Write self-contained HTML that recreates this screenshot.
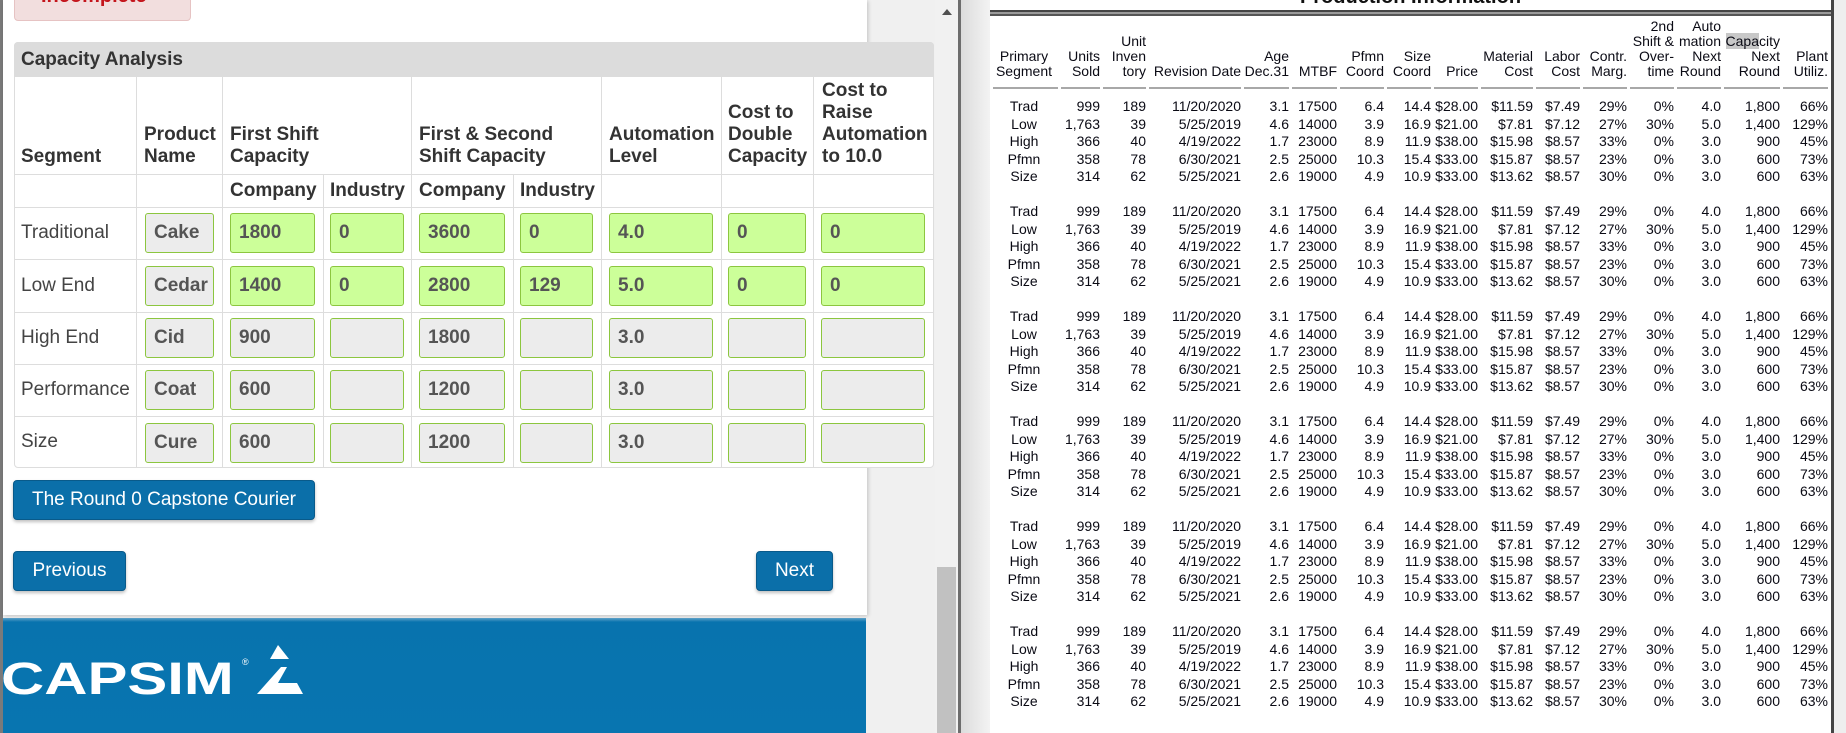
<!DOCTYPE html>
<html><head><meta charset="utf-8">
<style>
*{margin:0;padding:0;box-sizing:border-box}
body{width:1846px;height:733px;overflow:hidden;position:relative;background:#f0f0f0;font-family:"Liberation Sans",Arial,sans-serif}
.a{position:absolute}
.h{font-weight:bold;font-size:19px;color:#333;line-height:22px}
.lbl{font-size:19px;color:#444;line-height:22px}
.in{position:absolute;height:40px;border:1px solid #8cc63f;border-radius:3px;background:#ececec;font-weight:bold;font-size:19px;color:#555;line-height:38px;padding-left:8px;overflow:hidden;white-space:nowrap}
.g{background:#ccff99}
.vl{position:absolute;width:1px;background:#ddd}
.hl{position:absolute;height:1px;background:#ddd;left:14px;width:920px}
.btn{position:absolute;background:#0b6fa9;border:1px solid #095a8a;border-radius:4px;color:#fff;font-size:19px;text-align:center;line-height:38px;box-shadow:0 2px 3px rgba(0,0,0,.25)}
table{border-collapse:collapse;table-layout:fixed;font-size:14px;color:#0a0a14}
td{text-align:right;padding:0;white-space:nowrap;overflow:visible}
td.c{text-align:center}
.dt td{line-height:17.5px;height:17.5px}
.hd td{line-height:15px;vertical-align:bottom}
.sep td div{height:2px;background:#a8a8a8;margin-left:3px}
</style></head><body>
<!-- left side -->
<div class="a" style="left:0;top:0;width:3px;height:733px;background:#7a7a7a"></div>
<div class="a" style="left:3px;top:0;width:864px;height:615px;background:#fff;box-shadow:1px 1px 4px rgba(0,0,0,.2)"></div>
<div class="a" style="left:14px;top:-6px;width:177px;height:27px;background:#f2dede;border:1px solid #e6c3c3;border-radius:4px;overflow:hidden"><div style="position:absolute;left:26px;top:-10px;font-weight:bold;font-size:20px;color:#c4141b">Incomplete</div></div>
<!-- scrollbar -->
<div class="a" style="left:935px;top:0;width:23px;height:733px;background:#f1f1f1"></div>
<div class="a" style="left:937px;top:567px;width:19px;height:166px;background:#c1c1c1"></div>
<div class="a" style="left:942px;top:9px;width:0;height:0;border-left:5px solid transparent;border-right:5px solid transparent;border-bottom:6px solid #505050"></div>
<!-- panel -->
<div class="a" style="left:14px;top:42px;width:920px;height:426px;background:#fff;border:1px solid #ddd;border-radius:4px"></div>
<div class="a" style="left:14px;top:42px;width:920px;height:35px;background:#dcdcdc;border-radius:4px 4px 0 0"></div>
<div class="a h" style="left:21px;top:49px">Capacity Analysis</div>
<div class="hl" style="top:174px"></div><div class="hl" style="top:207px"></div><div class="hl" style="top:259px"></div><div class="hl" style="top:312px"></div><div class="hl" style="top:364px"></div><div class="hl" style="top:416px"></div>
<div class="vl" style="left:136px;top:77px;height:391px"></div>
<div class="vl" style="left:222px;top:77px;height:391px"></div>
<div class="vl" style="left:323px;top:174px;height:294px"></div>
<div class="vl" style="left:411px;top:77px;height:391px"></div>
<div class="vl" style="left:513px;top:174px;height:294px"></div>
<div class="vl" style="left:601px;top:77px;height:391px"></div>
<div class="vl" style="left:721px;top:77px;height:391px"></div>
<div class="vl" style="left:813px;top:77px;height:391px"></div>
<div class="a h" style="left:21px;top:146px">Segment</div>
<div class="a h" style="left:144px;top:124px">Product<br>Name</div>
<div class="a h" style="left:230px;top:124px">First Shift<br>Capacity</div>
<div class="a h" style="left:419px;top:124px">First &amp; Second<br>Shift Capacity</div>
<div class="a h" style="left:609px;top:124px">Automation<br>Level</div>
<div class="a h" style="left:728px;top:102px">Cost to<br>Double<br>Capacity</div>
<div class="a h" style="left:822px;top:80px">Cost to<br>Raise<br>Automation<br>to 10.0</div>
<div class="a h" style="left:230px;top:180px">Company</div>
<div class="a h" style="left:330px;top:180px">Industry</div>
<div class="a h" style="left:419px;top:180px">Company</div>
<div class="a h" style="left:520px;top:180px">Industry</div>

<div class="a lbl" style="left:21px;top:222px">Traditional</div>
<div class="in" style="left:145px;top:213px;width:69px">Cake</div>
<div class="in g" style="left:230px;top:213px;width:85px">1800</div>
<div class="in g" style="left:330px;top:213px;width:74px">0</div>
<div class="in g" style="left:419px;top:213px;width:86px">3600</div>
<div class="in g" style="left:520px;top:213px;width:73px">0</div>
<div class="in g" style="left:609px;top:213px;width:104px">4.0</div>
<div class="in g" style="left:728px;top:213px;width:78px">0</div>
<div class="in g" style="left:821px;top:213px;width:104px">0</div>

<div class="a lbl" style="left:21px;top:275px">Low End</div>
<div class="in" style="left:145px;top:266px;width:69px">Cedar</div>
<div class="in g" style="left:230px;top:266px;width:85px">1400</div>
<div class="in g" style="left:330px;top:266px;width:74px">0</div>
<div class="in g" style="left:419px;top:266px;width:86px">2800</div>
<div class="in g" style="left:520px;top:266px;width:73px">129</div>
<div class="in g" style="left:609px;top:266px;width:104px">5.0</div>
<div class="in g" style="left:728px;top:266px;width:78px">0</div>
<div class="in g" style="left:821px;top:266px;width:104px">0</div>

<div class="a lbl" style="left:21px;top:327px">High End</div>
<div class="in" style="left:145px;top:318px;width:69px">Cid</div>
<div class="in" style="left:230px;top:318px;width:85px">900</div>
<div class="in" style="left:330px;top:318px;width:74px"></div>
<div class="in" style="left:419px;top:318px;width:86px">1800</div>
<div class="in" style="left:520px;top:318px;width:73px"></div>
<div class="in" style="left:609px;top:318px;width:104px">3.0</div>
<div class="in" style="left:728px;top:318px;width:78px"></div>
<div class="in" style="left:821px;top:318px;width:104px"></div>

<div class="a lbl" style="left:21px;top:379px">Performance</div>
<div class="in" style="left:145px;top:370px;width:69px">Coat</div>
<div class="in" style="left:230px;top:370px;width:85px">600</div>
<div class="in" style="left:330px;top:370px;width:74px"></div>
<div class="in" style="left:419px;top:370px;width:86px">1200</div>
<div class="in" style="left:520px;top:370px;width:73px"></div>
<div class="in" style="left:609px;top:370px;width:104px">3.0</div>
<div class="in" style="left:728px;top:370px;width:78px"></div>
<div class="in" style="left:821px;top:370px;width:104px"></div>

<div class="a lbl" style="left:21px;top:431px">Size</div>
<div class="in" style="left:145px;top:423px;width:69px">Cure</div>
<div class="in" style="left:230px;top:423px;width:85px">600</div>
<div class="in" style="left:330px;top:423px;width:74px"></div>
<div class="in" style="left:419px;top:423px;width:86px">1200</div>
<div class="in" style="left:520px;top:423px;width:73px"></div>
<div class="in" style="left:609px;top:423px;width:104px">3.0</div>
<div class="in" style="left:728px;top:423px;width:78px"></div>
<div class="in" style="left:821px;top:423px;width:104px"></div>

<div class="btn" style="left:13px;top:480px;width:302px;height:40px">The Round 0 Capstone Courier</div>
<div class="btn" style="left:13px;top:551px;width:113px;height:40px">Previous</div>
<div class="btn" style="left:756px;top:551px;width:77px;height:40px">Next</div>

<!-- footer -->
<div class="a" style="left:3px;top:618px;width:863px;height:115px;background:linear-gradient(#5fa2c8 0,#0873ae 4px,#0875b0 100%)"></div>
<div class="a" style="left:3px;top:651px;width:240px;height:50px;overflow:hidden"><div style="position:absolute;left:-2px;top:3px;font-weight:bold;font-size:45px;line-height:50px;color:#fff;transform:scaleX(1.33);transform-origin:0 0;letter-spacing:0px">CAPSIM</div></div>
<div class="a" style="left:242px;top:657px;font-size:9px;color:#fff">®</div>
<svg class="a" style="left:0;top:0" width="866" height="733"><polygon points="278,645 270,659 289,659" fill="#fff"/><polygon points="281,667 287,667 278,683 297,683 303,694 257,694" fill="#fff"/></svg>

<!-- right window -->
<div class="a" style="left:958px;top:0;width:3px;height:733px;background:#6d6d6d"></div>
<div class="a" style="left:961px;top:0;width:29px;height:733px;background:linear-gradient(90deg,#dcdcdc,#f3f3f3)"></div>
<div class="a" style="left:990px;top:0;width:841px;height:733px;background:#fff"></div>
<div class="a" style="left:1831px;top:0;width:3px;height:733px;background:#444"></div>
<div class="a" style="left:1834px;top:0;width:12px;height:733px;background:#eee"></div>
<div class="a" style="left:990px;top:0;width:841px;height:11px;overflow:hidden"><div style="position:absolute;left:0;width:100%;top:-14px;text-align:center;font-weight:bold;font-size:20px;color:#111">Production Information</div></div>
<div class="a" style="left:990px;top:10px;width:841px;height:6px;border-top:2px solid #444;border-bottom:2px solid #555;background:#9a9a9a"></div>

<table class="a hd" style="left:990px;top:19px;width:838px">
<colgroup><col style="width:68px"><col style="width:42px"><col style="width:46px"><col style="width:95px"><col style="width:48px"><col style="width:48px"><col style="width:47px"><col style="width:47px"><col style="width:47px"><col style="width:55px"><col style="width:47px"><col style="width:47px"><col style="width:47px"><col style="width:47px"><col style="width:59px"><col style="width:48px"></colgroup>
<tr style="height:60px"><td class="c">Primary<br>Segment</td><td>Units<br>Sold</td><td>Unit<br>Inven<br>tory</td><td>Revision Date</td><td>Age<br>Dec.31</td><td>MTBF</td><td>Pfmn<br>Coord</td><td>Size<br>Coord</td><td>Price</td><td>Material<br>Cost</td><td>Labor<br>Cost</td><td>Contr.<br>Marg.</td><td>2nd<br>Shift &amp;<br>Over-<br>time</td><td>Auto<br>mation<br>Next<br>Round</td><td><span style="background:#c8c8c8">Capa</span>city<br>Next<br>Round</td><td>Plant<br>Utiliz.</td></tr>
</table>
<table class="a sep" style="left:990px;top:87px;width:838px">
<colgroup><col style="width:68px"><col style="width:42px"><col style="width:46px"><col style="width:95px"><col style="width:48px"><col style="width:48px"><col style="width:47px"><col style="width:47px"><col style="width:47px"><col style="width:55px"><col style="width:47px"><col style="width:47px"><col style="width:47px"><col style="width:47px"><col style="width:59px"><col style="width:48px"></colgroup>
<tr><td><div></div></td><td><div></div></td><td><div></div></td><td><div></div></td><td><div></div></td><td><div></div></td><td><div></div></td><td><div></div></td><td><div></div></td><td><div></div></td><td><div></div></td><td><div></div></td><td><div></div></td><td><div></div></td><td><div></div></td><td><div></div></td></tr>
</table>
<table class="a dt" style="left:990px;top:98px;width:838px">
<colgroup><col style="width:68px"><col style="width:42px"><col style="width:46px"><col style="width:95px"><col style="width:48px"><col style="width:48px"><col style="width:47px"><col style="width:47px"><col style="width:47px"><col style="width:55px"><col style="width:47px"><col style="width:47px"><col style="width:47px"><col style="width:47px"><col style="width:59px"><col style="width:48px"></colgroup>
<tr><td class="c">Trad</td><td>999</td><td>189</td><td>11/20/2020</td><td>3.1</td><td>17500</td><td>6.4</td><td>14.4</td><td>$28.00</td><td>$11.59</td><td>$7.49</td><td>29%</td><td>0%</td><td>4.0</td><td>1,800</td><td>66%</td></tr>
<tr><td class="c">Low</td><td>1,763</td><td>39</td><td>5/25/2019</td><td>4.6</td><td>14000</td><td>3.9</td><td>16.9</td><td>$21.00</td><td>$7.81</td><td>$7.12</td><td>27%</td><td>30%</td><td>5.0</td><td>1,400</td><td>129%</td></tr>
<tr><td class="c">High</td><td>366</td><td>40</td><td>4/19/2022</td><td>1.7</td><td>23000</td><td>8.9</td><td>11.9</td><td>$38.00</td><td>$15.98</td><td>$8.57</td><td>33%</td><td>0%</td><td>3.0</td><td>900</td><td>45%</td></tr>
<tr><td class="c">Pfmn</td><td>358</td><td>78</td><td>6/30/2021</td><td>2.5</td><td>25000</td><td>10.3</td><td>15.4</td><td>$33.00</td><td>$15.87</td><td>$8.57</td><td>23%</td><td>0%</td><td>3.0</td><td>600</td><td>73%</td></tr>
<tr><td class="c">Size</td><td>314</td><td>62</td><td>5/25/2021</td><td>2.6</td><td>19000</td><td>4.9</td><td>10.9</td><td>$33.00</td><td>$13.62</td><td>$8.57</td><td>30%</td><td>0%</td><td>3.0</td><td>600</td><td>63%</td></tr>
<tr><td colspan="16"></td></tr>
<tr><td class="c">Trad</td><td>999</td><td>189</td><td>11/20/2020</td><td>3.1</td><td>17500</td><td>6.4</td><td>14.4</td><td>$28.00</td><td>$11.59</td><td>$7.49</td><td>29%</td><td>0%</td><td>4.0</td><td>1,800</td><td>66%</td></tr>
<tr><td class="c">Low</td><td>1,763</td><td>39</td><td>5/25/2019</td><td>4.6</td><td>14000</td><td>3.9</td><td>16.9</td><td>$21.00</td><td>$7.81</td><td>$7.12</td><td>27%</td><td>30%</td><td>5.0</td><td>1,400</td><td>129%</td></tr>
<tr><td class="c">High</td><td>366</td><td>40</td><td>4/19/2022</td><td>1.7</td><td>23000</td><td>8.9</td><td>11.9</td><td>$38.00</td><td>$15.98</td><td>$8.57</td><td>33%</td><td>0%</td><td>3.0</td><td>900</td><td>45%</td></tr>
<tr><td class="c">Pfmn</td><td>358</td><td>78</td><td>6/30/2021</td><td>2.5</td><td>25000</td><td>10.3</td><td>15.4</td><td>$33.00</td><td>$15.87</td><td>$8.57</td><td>23%</td><td>0%</td><td>3.0</td><td>600</td><td>73%</td></tr>
<tr><td class="c">Size</td><td>314</td><td>62</td><td>5/25/2021</td><td>2.6</td><td>19000</td><td>4.9</td><td>10.9</td><td>$33.00</td><td>$13.62</td><td>$8.57</td><td>30%</td><td>0%</td><td>3.0</td><td>600</td><td>63%</td></tr>
<tr><td colspan="16"></td></tr>
<tr><td class="c">Trad</td><td>999</td><td>189</td><td>11/20/2020</td><td>3.1</td><td>17500</td><td>6.4</td><td>14.4</td><td>$28.00</td><td>$11.59</td><td>$7.49</td><td>29%</td><td>0%</td><td>4.0</td><td>1,800</td><td>66%</td></tr>
<tr><td class="c">Low</td><td>1,763</td><td>39</td><td>5/25/2019</td><td>4.6</td><td>14000</td><td>3.9</td><td>16.9</td><td>$21.00</td><td>$7.81</td><td>$7.12</td><td>27%</td><td>30%</td><td>5.0</td><td>1,400</td><td>129%</td></tr>
<tr><td class="c">High</td><td>366</td><td>40</td><td>4/19/2022</td><td>1.7</td><td>23000</td><td>8.9</td><td>11.9</td><td>$38.00</td><td>$15.98</td><td>$8.57</td><td>33%</td><td>0%</td><td>3.0</td><td>900</td><td>45%</td></tr>
<tr><td class="c">Pfmn</td><td>358</td><td>78</td><td>6/30/2021</td><td>2.5</td><td>25000</td><td>10.3</td><td>15.4</td><td>$33.00</td><td>$15.87</td><td>$8.57</td><td>23%</td><td>0%</td><td>3.0</td><td>600</td><td>73%</td></tr>
<tr><td class="c">Size</td><td>314</td><td>62</td><td>5/25/2021</td><td>2.6</td><td>19000</td><td>4.9</td><td>10.9</td><td>$33.00</td><td>$13.62</td><td>$8.57</td><td>30%</td><td>0%</td><td>3.0</td><td>600</td><td>63%</td></tr>
<tr><td colspan="16"></td></tr>
<tr><td class="c">Trad</td><td>999</td><td>189</td><td>11/20/2020</td><td>3.1</td><td>17500</td><td>6.4</td><td>14.4</td><td>$28.00</td><td>$11.59</td><td>$7.49</td><td>29%</td><td>0%</td><td>4.0</td><td>1,800</td><td>66%</td></tr>
<tr><td class="c">Low</td><td>1,763</td><td>39</td><td>5/25/2019</td><td>4.6</td><td>14000</td><td>3.9</td><td>16.9</td><td>$21.00</td><td>$7.81</td><td>$7.12</td><td>27%</td><td>30%</td><td>5.0</td><td>1,400</td><td>129%</td></tr>
<tr><td class="c">High</td><td>366</td><td>40</td><td>4/19/2022</td><td>1.7</td><td>23000</td><td>8.9</td><td>11.9</td><td>$38.00</td><td>$15.98</td><td>$8.57</td><td>33%</td><td>0%</td><td>3.0</td><td>900</td><td>45%</td></tr>
<tr><td class="c">Pfmn</td><td>358</td><td>78</td><td>6/30/2021</td><td>2.5</td><td>25000</td><td>10.3</td><td>15.4</td><td>$33.00</td><td>$15.87</td><td>$8.57</td><td>23%</td><td>0%</td><td>3.0</td><td>600</td><td>73%</td></tr>
<tr><td class="c">Size</td><td>314</td><td>62</td><td>5/25/2021</td><td>2.6</td><td>19000</td><td>4.9</td><td>10.9</td><td>$33.00</td><td>$13.62</td><td>$8.57</td><td>30%</td><td>0%</td><td>3.0</td><td>600</td><td>63%</td></tr>
<tr><td colspan="16"></td></tr>
<tr><td class="c">Trad</td><td>999</td><td>189</td><td>11/20/2020</td><td>3.1</td><td>17500</td><td>6.4</td><td>14.4</td><td>$28.00</td><td>$11.59</td><td>$7.49</td><td>29%</td><td>0%</td><td>4.0</td><td>1,800</td><td>66%</td></tr>
<tr><td class="c">Low</td><td>1,763</td><td>39</td><td>5/25/2019</td><td>4.6</td><td>14000</td><td>3.9</td><td>16.9</td><td>$21.00</td><td>$7.81</td><td>$7.12</td><td>27%</td><td>30%</td><td>5.0</td><td>1,400</td><td>129%</td></tr>
<tr><td class="c">High</td><td>366</td><td>40</td><td>4/19/2022</td><td>1.7</td><td>23000</td><td>8.9</td><td>11.9</td><td>$38.00</td><td>$15.98</td><td>$8.57</td><td>33%</td><td>0%</td><td>3.0</td><td>900</td><td>45%</td></tr>
<tr><td class="c">Pfmn</td><td>358</td><td>78</td><td>6/30/2021</td><td>2.5</td><td>25000</td><td>10.3</td><td>15.4</td><td>$33.00</td><td>$15.87</td><td>$8.57</td><td>23%</td><td>0%</td><td>3.0</td><td>600</td><td>73%</td></tr>
<tr><td class="c">Size</td><td>314</td><td>62</td><td>5/25/2021</td><td>2.6</td><td>19000</td><td>4.9</td><td>10.9</td><td>$33.00</td><td>$13.62</td><td>$8.57</td><td>30%</td><td>0%</td><td>3.0</td><td>600</td><td>63%</td></tr>
<tr><td colspan="16"></td></tr>
<tr><td class="c">Trad</td><td>999</td><td>189</td><td>11/20/2020</td><td>3.1</td><td>17500</td><td>6.4</td><td>14.4</td><td>$28.00</td><td>$11.59</td><td>$7.49</td><td>29%</td><td>0%</td><td>4.0</td><td>1,800</td><td>66%</td></tr>
<tr><td class="c">Low</td><td>1,763</td><td>39</td><td>5/25/2019</td><td>4.6</td><td>14000</td><td>3.9</td><td>16.9</td><td>$21.00</td><td>$7.81</td><td>$7.12</td><td>27%</td><td>30%</td><td>5.0</td><td>1,400</td><td>129%</td></tr>
<tr><td class="c">High</td><td>366</td><td>40</td><td>4/19/2022</td><td>1.7</td><td>23000</td><td>8.9</td><td>11.9</td><td>$38.00</td><td>$15.98</td><td>$8.57</td><td>33%</td><td>0%</td><td>3.0</td><td>900</td><td>45%</td></tr>
<tr><td class="c">Pfmn</td><td>358</td><td>78</td><td>6/30/2021</td><td>2.5</td><td>25000</td><td>10.3</td><td>15.4</td><td>$33.00</td><td>$15.87</td><td>$8.57</td><td>23%</td><td>0%</td><td>3.0</td><td>600</td><td>73%</td></tr>
<tr><td class="c">Size</td><td>314</td><td>62</td><td>5/25/2021</td><td>2.6</td><td>19000</td><td>4.9</td><td>10.9</td><td>$33.00</td><td>$13.62</td><td>$8.57</td><td>30%</td><td>0%</td><td>3.0</td><td>600</td><td>63%</td></tr>
</table>
</body></html>
